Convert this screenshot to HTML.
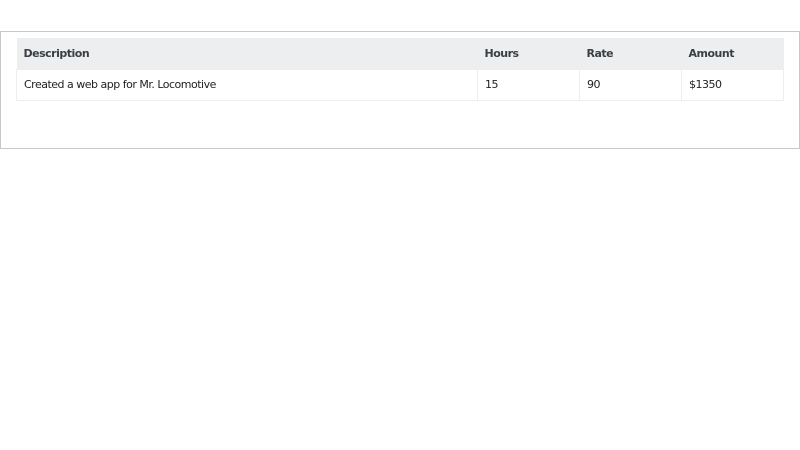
<!DOCTYPE html>
<html><head><meta charset="utf-8"><style>
html,body{margin:0;padding:0;background:#fff;width:800px;height:450px;overflow:hidden}
.box{position:absolute;left:0;top:31px;width:798px;height:116px;border:1px solid #c8c8c8}
table{position:absolute;left:15px;top:6px;width:768px;border-collapse:collapse;font-family:"DejaVu Sans","Liberation Sans",sans-serif;font-size:11px;letter-spacing:-0.5px;color:#333}
th,td{height:31px;padding:0 7px;text-align:left;box-sizing:border-box;vertical-align:middle}
th{background:#eceeef;font-weight:bold;color:#3a3f44;padding-top:1px}
td{border:1px solid #eceeef;color:#222}
</style></head><body>
<div class="box"><table>
<tr><th style="width:461px">Description</th><th style="width:102px">Hours</th><th style="width:102px">Rate</th><th>Amount</th></tr>
<tr><td>Created a web app for Mr. Locomotive</td><td>15</td><td>90</td><td>$1350</td></tr>
</table></div>
</body></html>
